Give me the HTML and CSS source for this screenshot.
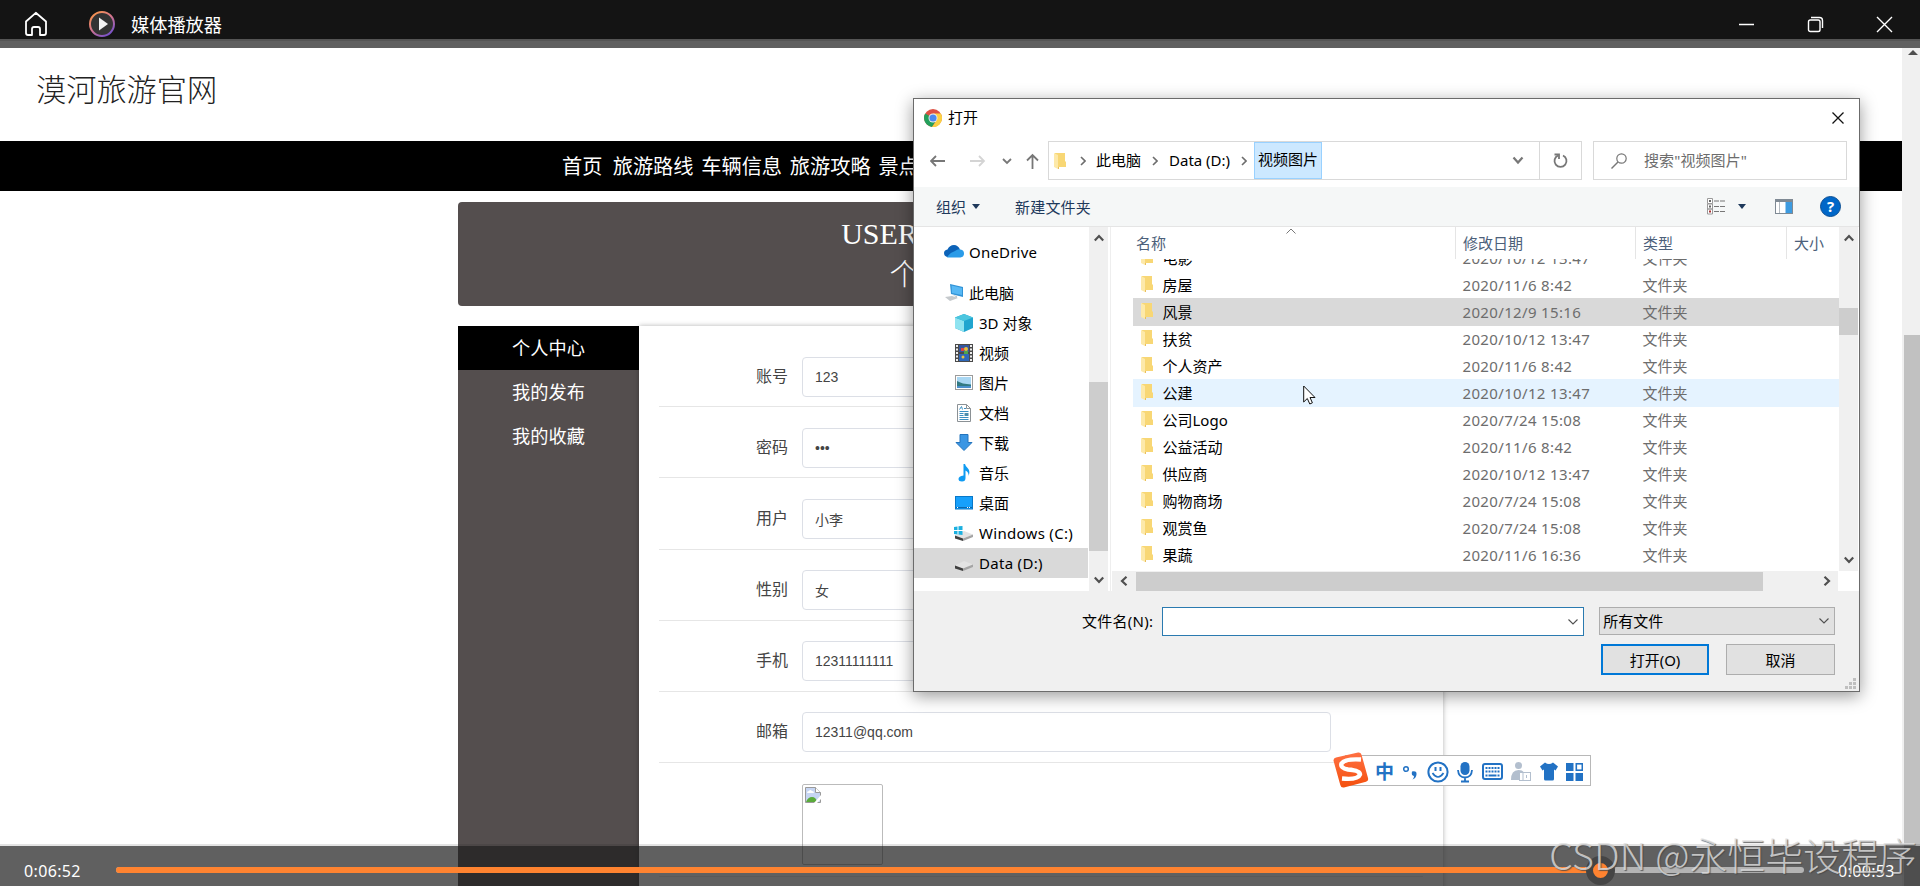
FILE: index.html
```html
<!DOCTYPE html>
<html lang="zh-CN">
  <head>
    <meta charset="UTF-8" />
    <meta name="viewport" content="width=device-width, initial-scale=1.0" />
    <title>媒体播放器</title>
    <link rel="stylesheet" href="styles.css">
  </head>
  <body>
    <!-- shared icons -->
    <svg class="sprite" width="0" height="0">
      <symbol id="folder" viewBox="0 0 12 18">
        <path d="M1 1h10v8l1 1v5H1z" fill="#f8d775" />
        <path d="M0 1l4 2v14l-4-2z" fill="#fde9a9" />
        <path d="M4 15h1v2H4z" fill="#e9bf5c" />
      </symbol>
      <symbol id="chev-right" viewBox="0 0 6 10">
        <path d="M1 1l4 4-4 4" fill="none" stroke="#6d6d6d" stroke-width="1.6" />
      </symbol>
      <symbol id="chev-up" viewBox="0 0 10 8">
        <path d="M.8 6.500L5 2l4.200 4.500" fill="none" stroke="#505050" stroke-width="2.200" />
      </symbol>
      <symbol id="chev-down" viewBox="0 0 10 8">
        <path d="M.8 1.500L5 6l4.200-4.500" fill="none" stroke="#505050" stroke-width="2.200" />
      </symbol>
      <symbol id="chev-thin" viewBox="0 0 10 6">
        <path d="M.5.5L5 5 9.500.5" fill="none" stroke="#505050" stroke-width="1.100" />
      </symbol>
      <symbol id="drive" viewBox="0 0 18 10">
        <path d="M0 4.500L9 0l9 3.500-10 4z" fill="#e3e3e3" />
        <path d="M0 4.500l8 3V10L0 7.500z" fill="#3f3f3f" />
        <path d="M8 7.500l10-4V6L8 10z" fill="#a5a5a5" />
      </symbol>
    </svg>

    <div class="player-bar">
      <svg class="home" width="24" height="26" viewBox="0 0 24 26">
        <path d="M2 10.500L11.800 1.800 22 10.500V22q0 2-2 2h-4v-6q0-2-2-2h-4q-2 0-2 2v6H4q-2 0-2-2z" fill="none" stroke="#fff" stroke-width="1.800" stroke-linejoin="round" />
      </svg>
      <svg class="play-logo" width="26" height="26" viewBox="0 0 26 26">
        <defs>
          <linearGradient id="ring" x1="0" y1="0" x2=".7" y2="1">
            <stop offset="0" stop-color="#ff9a3c" />
            <stop offset=".5" stop-color="#d9788a" />
            <stop offset="1" stop-color="#7a52c8" />
          </linearGradient>
        </defs>
        <circle cx="13" cy="13" r="12" fill="#333" stroke="url(#ring)" stroke-width="2" />
        <path d="M10 6.500l9 6.500-9 6.500z" fill="#f2f2f2" />
      </svg>
      <span class="player-title">媒体播放器</span>
      <div class="window-buttons">
        <svg width="17" height="17" viewBox="0 0 17 17"><path d="M1 8.500h15" stroke="#fff" stroke-width="1.500" /></svg>
        <svg width="17" height="17" viewBox="0 0 17 17">
          <rect x="1.500" y="4" width="11.500" height="11.500" rx="1.800" fill="none" stroke="#fff" stroke-width="1.400" />
          <path d="M4 1.500h8.500q3 0 3 3V12" fill="none" stroke="#fff" stroke-width="1.400" />
        </svg>
        <svg width="17" height="17" viewBox="0 0 17 17"><path d="M1 1l15 15M16 1L1 16" stroke="#fff" stroke-width="1.400" /></svg>
      </div>
    </div>
    <div class="bar-shade"></div>

    <div class="screen">
      <div class="site">
        <header class="site-header">漠河旅游官网</header>
        <nav class="site-nav">
          <a class="first">首页</a>
          <a>旅游路线</a>
          <a>车辆信息</a>
          <a>旅游攻略</a>
          <a>景点信息</a>
        </nav>
        <div class="banner">
          <p>USER / CENTER</p>
          <p>个人中心</p>
        </div>
        <div class="center">
          <ul class="side-menu">
            <li class="active">个人中心</li>
            <li>我的发布</li>
            <li>我的收藏</li>
          </ul>
          <form class="user-form">
            <div class="form-group">
              <label for="account">账号</label>
              <input type="text" id="account" value="123" />
            </div>
            <div class="form-group">
              <label for="password">密码</label>
              <input type="password" id="password" value="123" />
            </div>
            <div class="form-group">
              <label for="username">用户</label>
              <input type="text" id="username" value="小李" />
            </div>
            <div class="form-group">
              <label for="gender">性别</label>
              <input type="text" id="gender" value="女" />
            </div>
            <div class="form-group">
              <label for="phone">手机</label>
              <input type="text" id="phone" value="12311111111" />
            </div>
            <div class="form-group">
              <label for="email">邮箱</label>
              <input type="text" id="email" value="12311@qq.com" />
            </div>
            <div class="form-group photo-row">
              <div class="photo">
                <svg width="16" height="16" viewBox="0 0 16 16">
                  <path d="M.5.5h10l5 5v10H.5z" fill="#c6d5f3" stroke="#9a9a9a" />
                  <path d="M10.500.5v5h5" fill="#fff" stroke="#9a9a9a" />
                  <path d="M2 6q0-2 2-2 1-2 3 0 2 0 2 2z" fill="#fff" />
                  <path d="M1 15q2-5 6-5 4 0 5 5z" fill="#5aab3b" />
                  <path d="M16 8l-7 8h3l4-4z" fill="#fff" />
                </svg>
              </div>
            </div>
          </form>
        </div>
      </div>
      <div class="page-scroll">
        <div class="page-arrow"></div>
        <div class="page-thumb"></div>
      </div>
    </div>

    <!-- file dialog -->
    <div class="dialog">
      <div class="dialog-title">
        <svg width="18" height="18" viewBox="0 0 18 18">
          <circle cx="9" cy="9" r="9" fill="#dd5144" />
          <path d="M1.200 4.500A9 9 0 0 0 8 17.900L12.500 11 9 9z" fill="#23a05c" />
          <path d="M9 4.500h7.800A9 9 0 0 1 8 17.950L12.800 11z" fill="#fbd043" />
          <circle cx="9" cy="9" r="4.500" fill="#f3f0e8" />
          <circle cx="9" cy="9" r="3.600" fill="#4a8af0" />
        </svg>
        <span>打开</span>
        <svg class="dialog-close" width="12" height="12" viewBox="0 0 12 12"><path d="M.5.5l11 11M11.500.5l-11 11" stroke="#111" stroke-width="1.300" /></svg>
      </div>

      <div class="path-row">
        <svg class="arrows" width="110" height="16" viewBox="0 0 110 16">
          <path d="M15 8H1M6 3L1 8l5 5" fill="none" stroke="#777" stroke-width="1.800" />
          <path d="M40 8h14M49 3l5 5-5 5" fill="none" stroke="#d4d4d4" stroke-width="1.800" />
          <path d="M73 6l4 4 4-4" fill="none" stroke="#777" stroke-width="1.800" />
          <path d="M102.500 16V2M97 7.500l5.500-5.500 5.500 5.500" fill="none" stroke="#777" stroke-width="1.800" />
        </svg>
        <div class="path-box">
          <svg class="path-folder" width="12" height="18"><use href="#folder" /></svg>
          <svg class="sep" width="6" height="10"><use href="#chev-right" /></svg>
          <span class="crumb">此电脑</span>
          <svg class="sep" width="6" height="10"><use href="#chev-right" /></svg>
          <span class="crumb">Data (D:)</span>
          <svg class="sep" width="6" height="10"><use href="#chev-right" /></svg>
          <span class="crumb current">视频图片</span>
          <svg class="path-drop" width="12" height="9" viewBox="0 0 12 9"><path d="M1.500 1.500L6 6.500l4.500-5" fill="none" stroke="#777" stroke-width="2.200" /></svg>
          <div class="refresh">
            <svg width="15" height="16" viewBox="0 0 15 16"><path d="M5 2.500A6 6 0 1 0 10 2.500" fill="none" stroke="#777" stroke-width="1.800" /><path d="M1.500 1.500h4.500v4.500" fill="none" stroke="#777" stroke-width="1.800" /></svg>
          </div>
        </div>
        <div class="search-box">
          <svg width="16" height="16" viewBox="0 0 16 16"><circle cx="10.500" cy="5.500" r="4.700" fill="none" stroke="#777" stroke-width="1.200" /><path d="M7 9L.5 15.500" stroke="#777" stroke-width="1.400" /></svg>
          <span>搜索"视频图片"</span>
        </div>
      </div>

      <div class="toolbar">
        <span>组织</span>
        <i class="caret"></i>
        <span class="new-folder">新建文件夹</span>
        <svg class="view-icon" width="18" height="17" viewBox="0 0 18 17">
          <path d="M.5.5h5v5h-5zM.5 6h5v5h-5zM.5 11h5v5h-5z" fill="#fff" stroke="#9a9a9a" />
          <path d="M2 2h2v2H2zM2 7.500h2v2H2z" fill="#666" />
          <path d="M2 12.500h2v2H2z" fill="#a33" />
          <path d="M7 3h5M13 3h5M7 8.500h5M13 8.500h5M7 13.500h5M13 13.500h5" stroke="#777" stroke-width="1.200" />
        </svg>
        <i class="caret"></i>
        <svg class="preview-icon" width="18" height="15" viewBox="0 0 18 15">
          <rect x=".5" y=".5" width="17" height="14" fill="#fff" stroke="#7f8a94" />
          <path d="M0 0h18v3H0z" fill="#7f8a94" />
          <path d="M10.500 3H17v11h-6.500z" fill="#3d9be0" />
          <path d="M4.500 3v11" stroke="#b5bcc2" />
        </svg>
        <span class="help">?</span>
      </div>

      <div class="browser">
        <ul class="tree">
          <li class="top one-drive">
            <svg width="20" height="13" viewBox="0 0 20 13">
              <path d="M4 12q-4-.5-4-4 0-3 3.500-3.500Q5.500 0 10 0q4 0 6 4.500L10 9z" fill="#0c62b8" />
              <path d="M3 12.500Q5 8 11 6q3-2.500 5.500-1.500 3.500.5 3.500 4t-3.500 4z" fill="#2a9be8" />
            </svg>OneDrive
          </li>
          <li class="top">
            <svg width="20" height="17" viewBox="0 0 20 17">
              <path d="M6 0l13 3v10L7 10z" fill="#3293d6" />
              <path d="M7.500 1.500l10.500 2.500v7L8 9z" fill="#57b8f4" />
              <path d="M1 13l7-1 6 2-8 3zM9 11l4 1v2z" fill="#c5c9cc" />
            </svg>此电脑
          </li>
          <li>
            <svg width="18" height="18" viewBox="0 0 18 18">
              <path d="M9 0l9 3.500v10.500L9 18 0 14V3.500z" fill="#20a5cf" />
              <path d="M0 3.500L9 7v11l-9-4z" fill="#8fe3f0" />
              <path d="M0 3.500L9 0l9 3.500L9 7z" fill="#4cc6df" />
            </svg>3D 对象
          </li>
          <li>
            <svg width="18" height="18" viewBox="0 0 18 18">
              <path d="M0 0h18v18H0z" fill="#4a4a4a" />
              <path d="M4 1h10v7H4z" fill="#35569e" /><path d="M4 10h10v7H4z" fill="#2e67b7" />
              <path d="M6 4h3v3H6z" fill="#e0443c" /><circle cx="11" cy="5" r="2" fill="#e8c23e" />
              <path d="M9 7h4v3H9z" fill="#4fa54b" /><circle cx="8" cy="13" r="1.500" fill="#e8c23e" />
              <path d="M2 1v17M16 1v17" stroke="#eee" stroke-width="2" stroke-dasharray="2 1.500" />
            </svg>视频
          </li>
          <li>
            <svg width="18" height="15" viewBox="0 0 18 15">
              <rect x=".5" y=".5" width="17" height="14" fill="#fff" stroke="#9b9b9b" />
              <path d="M2 2h14v11H2z" fill="#a9d7f3" />
              <path d="M2 6q5 3 14 3.500V13H2z" fill="#327a83" /><path d="M2 11h14v2H2z" fill="#4b90cd" />
            </svg>图片
          </li>
          <li>
            <svg width="18" height="18" viewBox="0 0 18 18">
              <path d="M2.500.5h9l4 4v13h-13z" fill="#fff" stroke="#8b9195" /><path d="M11.500.5v4h4" fill="none" stroke="#8b9195" />
              <path d="M4.500 5.500l2-3 1 3M9 4.500h2M4.500 7.500h9M4.500 9.500h4M4.500 11.500h4M4.500 13.500h9M4.500 15.500h9" fill="none" stroke="#3b8fc2" /><path d="M9.500 9h4v3h-4z" fill="#4b8dac" />
            </svg>文档
          </li>
          <li>
            <svg width="18" height="17" viewBox="0 0 18 17"><path d="M5 .5h8v8h4L9 16.500 1 8.500h4z" fill="#3b96e3" stroke="#2474bd" /></svg>下载
          </li>
          <li>
            <svg width="18" height="18" viewBox="0 0 18 18"><path d="M8.500 0H10q.5 2.500 3 4.500 2.500 3 .5 7.500.5-4-3-5.500V14q0 3.500-3.500 3.500T3.500 15q0-3 5-3.500z" fill="#0f9bf2" /></svg>音乐
          </li>
          <li>
            <svg width="18" height="14" viewBox="0 0 18 14"><rect x=".5" y=".5" width="17" height="12.500" fill="#17a0fb" stroke="#0878c9" /><path d="M1 11.500h16" stroke="#0b67ad" /><path d="M2 11.500h1M12 11.500h1M14 11.500h1" stroke="#fff" /></svg>桌面
          </li>
          <li class="disk">
            <svg class="win-drive" width="19" height="15" viewBox="0 0 19 15">
              <use href="#drive" x="1" y="5" width="18" height="10" />
              <path d="M0 1l3.500-.5V4H0zM4.500.3L8.500 0v4h-4zM0 5h3.500v3.500L0 8zM4.500 5h4v4l-4-.4z" fill="#1bb0e0" />
            </svg>Windows (C:)
          </li>
          <li class="disk selected">
            <svg class="data-drive" width="18" height="10"><use href="#drive" /></svg>Data (D:)
          </li>
        </ul>
        <div class="vscroll tree-scroll">
          <svg width="10" height="8"><use href="#chev-up" /></svg>
          <div class="thumb"></div>
          <svg width="10" height="8"><use href="#chev-down" /></svg>
        </div>

        <div class="files">
          <div class="files-body">
            <div class="files-list">
              <div class="file-head">
                <svg class="sort-mark" width="10" height="6"><path d="M.5 5.500L5 1l4.500 4.500" fill="none" stroke="#777" /></svg>
                <span>名称</span><span>修改日期</span><span>类型</span><span>大小</span>
              </div>
              <div class="file-rows">
                <div class="file-row"><svg width="12" height="18"><use href="#folder" /></svg><b>电影</b><span class="date">2020/10/12 13:47</span><span>文件夹</span></div>
                <div class="file-row"><svg width="12" height="18"><use href="#folder" /></svg><b>房屋</b><span class="date">2020/11/6 8:42</span><span>文件夹</span></div>
                <div class="file-row selected"><svg width="12" height="18"><use href="#folder" /></svg><b>风景</b><span class="date">2020/12/9 15:16</span><span>文件夹</span></div>
                <div class="file-row"><svg width="12" height="18"><use href="#folder" /></svg><b>扶贫</b><span class="date">2020/10/12 13:47</span><span>文件夹</span></div>
                <div class="file-row"><svg width="12" height="18"><use href="#folder" /></svg><b>个人资产</b><span class="date">2020/11/6 8:42</span><span>文件夹</span></div>
                <div class="file-row hovered"><svg width="12" height="18"><use href="#folder" /></svg><b>公建</b><span class="date">2020/10/12 13:47</span><span>文件夹</span></div>
                <div class="file-row"><svg width="12" height="18"><use href="#folder" /></svg><b>公司Logo</b><span class="date">2020/7/24 15:08</span><span>文件夹</span></div>
                <div class="file-row"><svg width="12" height="18"><use href="#folder" /></svg><b>公益活动</b><span class="date">2020/11/6 8:42</span><span>文件夹</span></div>
                <div class="file-row"><svg width="12" height="18"><use href="#folder" /></svg><b>供应商</b><span class="date">2020/10/12 13:47</span><span>文件夹</span></div>
                <div class="file-row"><svg width="12" height="18"><use href="#folder" /></svg><b>购物商场</b><span class="date">2020/7/24 15:08</span><span>文件夹</span></div>
                <div class="file-row"><svg width="12" height="18"><use href="#folder" /></svg><b>观赏鱼</b><span class="date">2020/7/24 15:08</span><span>文件夹</span></div>
                <div class="file-row"><svg width="12" height="18"><use href="#folder" /></svg><b>果蔬</b><span class="date">2020/11/6 16:36</span><span>文件夹</span></div>
              </div>
            </div>
            <div class="vscroll list-scroll">
              <svg width="10" height="8"><use href="#chev-up" /></svg>
              <div class="thumb"></div>
              <svg width="10" height="8"><use href="#chev-down" /></svg>
            </div>
          </div>
          <div class="hscroll">
            <svg width="8" height="10" viewBox="0 0 8 10"><path d="M6.500.8L2 5l4.500 4.200" fill="none" stroke="#505050" stroke-width="2.200" /></svg>
            <div class="thumb"></div>
            <svg class="right" width="8" height="10" viewBox="0 0 8 10"><path d="M1.500.8L6 5 1.500 9.200" fill="none" stroke="#505050" stroke-width="2.200" /></svg>
          </div>
        </div>
      </div>

      <div class="dialog-footer">
        <div class="name-row">
          <label>文件名(N):</label>
          <div class="combo file-name"><svg width="10" height="6"><use href="#chev-thin" /></svg></div>
          <div class="combo file-type">所有文件<svg width="10" height="6"><use href="#chev-thin" /></svg></div>
        </div>
        <div class="button-row">
          <button class="btn-open">打开(O)</button>
          <button>取消</button>
        </div>
        <svg class="grip" width="12" height="12" viewBox="0 0 12 12"><path d="M8 0h3v3H8zM4 4h3v3H4zM8 4h3v3H8zM0 8h3v3H0zM4 8h3v3H4zM8 8h3v3H8z" fill="#bfbfbf" /></svg>
      </div>
    </div>

    <svg class="cursor" width="13" height="20" viewBox="0 0 13 20"><path d="M.7 1v16l3.600-3.500 2.500 5.500 2.600-1.200L7 12.500h5z" fill="#fff" stroke="#111" /></svg>

    <!-- input method toolbar -->
    <div class="ime">
      <svg class="ime-logo" width="36" height="36" viewBox="0 0 36 36">
        <defs>
          <linearGradient id="sogou" x1="0" y1="0" x2="0" y2="1">
            <stop offset="0" stop-color="#ff7043" />
            <stop offset="1" stop-color="#f4500d" />
          </linearGradient>
        </defs>
        <path d="M3 5.500L25 .6q3-.6 3.600 2.400L35 26q.8 3-2 3.800L11 35.500q-3 .6-3.700-2.400L.6 9Q0 6.200 3 5.500z" fill="url(#sogou)" />
        <path d="M28 7.500Q12 6.500 8.500 11.500 7 16 15 17.500q12 1 12 5Q25 28 9 26.500" fill="none" stroke="#fff" stroke-width="4.400" />
      </svg>
      <span class="ime-lang">中</span>
      <svg width="16" height="18" viewBox="0 0 16 18"><circle cx="4" cy="6" r="2.300" fill="none" stroke="#2272c4" stroke-width="1.500" /><path d="M10 8.500q5-1 4.500 3-.5 4-4 5 1.500-1.500 1.500-3.500-3-.5-2-4.500z" fill="#2272c4" /></svg>
      <svg width="22" height="22" viewBox="0 0 22 22"><circle cx="11" cy="11" r="9.600" fill="none" stroke="#2272c4" stroke-width="2" /><path d="M8.500 6v4M13.500 6v4" stroke="#2272c4" stroke-width="2" /><path d="M5.500 12q5.500 8 11 0" fill="none" stroke="#2272c4" stroke-width="1.700" /></svg>
      <svg width="16" height="22" viewBox="0 0 16 22"><rect x="3.500" y="1" width="9" height="13" rx="4.500" fill="#2272c4" /><path d="M1 9q.5 7.500 7 7.500T15 9M8 16v4M4 20.500h8" fill="none" stroke="#2272c4" stroke-width="1.800" /></svg>
      <svg width="21" height="17" viewBox="0 0 21 17"><rect x="1" y="1" width="19" height="15" rx="2" fill="none" stroke="#2272c4" stroke-width="2" /><path d="M3.500 5h14M3.500 8.500h14" stroke="#2272c4" stroke-width="2" stroke-dasharray="2 1" /><path d="M3.500 12.500h2M6.500 12.500h8M15.500 12.500h2" stroke="#2272c4" stroke-width="2" /></svg>
      <svg width="20" height="19" viewBox="0 0 20 19"><circle cx="7.500" cy="3.500" r="3.500" fill="#b3bfce" /><path d="M0 18q0-10 7.500-10 4 0 5 2H8v8z" fill="#b3bfce" /><rect x="8.500" y="10.500" width="11" height="8" fill="#fff" stroke="#b3bfce" /><path d="M12 10v9M15.500 13v3" stroke="#b3bfce" /></svg>
      <svg width="18" height="19" viewBox="0 0 18 19"><path d="M5 .5q4 3 8 0l5 4-2.500 4-1.500-1V17q0 1.500-1.500 1.500h-7Q4 18.500 4 17V7.500l-1.500 1L0 4.500z" fill="#2272c4" /></svg>
      <svg width="17" height="18" viewBox="0 0 17 18"><path d="M0 0h7.500v8H0zM0 10h7.500v8H0zM9.500 10H17v8H9.500z" fill="#2272c4" /><rect x="10.300" y=".8" width="6" height="6.400" fill="#fff" stroke="#2272c4" stroke-width="1.600" /></svg>
    </div>

    <div class="controls">
      <span>0:06:52</span>
      <div class="track">
        <div class="played" style="width: 88%"></div>
        <div class="knob" style="left: 88%"></div>
      </div>
      <span>0:00:53</span>
    </div>
    <div class="watermark">CSDN @永恒毕设程序</div>
  </body>
</html>
```

FILE: styles.css
```css
* {
  box-sizing: border-box;
}

body {
  margin: 0;
  height: 886px;
  overflow: hidden;
  position: relative;
  background: #fff;
  font-family: "Noto Sans", "Noto Sans CJK SC", sans-serif;
}

svg {
  display: block;
  flex-shrink: 0;
}

.sprite {
  position: absolute;
}

/* Player title bar */
.player-bar {
  height: 39px;
  background: #141414;
  color: #fff;
  display: flex;
  align-items: center;
  padding: 9px 27px 0 24px;
}

.play-logo {
  margin-left: 41px;
}

.player-title {
  margin-left: 16px;
  padding-top: 1px;
  font-size: 18.2px;
  line-height: 28px;
}

.window-buttons {
  display: flex;
  gap: 52px;
  margin-left: auto;
}

.bar-shade {
  height: 9px;
  background: #606060;
  border-top: 2px solid #555;
}

.screen {
  height: 838px;
  display: flex;
  overflow: hidden;
}

/* Travel site */
.site {
  flex: 1;
}

.site-header {
  height: 93px;
  padding-left: 36px;
  font-size: 30.2px;
  font-weight: 300;
  line-height: 84px;
  color: #222;
}

.site-nav {
  height: 50px;
  background: #000;
  color: #fff;
  display: flex;
  gap: 7.8px;
  padding-left: 562px;
  font-size: 20.2px;
  line-height: 51px;
}

.site-nav .first {
  margin-right: 2.500px;
}

.banner {
  width: 985px;
  height: 104px;
  margin: 11px 0 20px 458px;
  padding-top: 11px;
  padding-right: 2px;
  border-radius: 4px;
  background: #544e4e;
  color: #fff;
  text-align: center;
  font-family: "Liberation Serif", "Noto Sans CJK SC", serif;
  font-size: 30px;
  font-weight: 300;
  line-height: 41px;
}

.banner p {
  margin: 0;
}

.center {
  width: 985px;
  height: 700px;
  margin-left: 458px;
  display: flex;
}

.side-menu {
  width: 181px;
  margin: 0;
  padding: 0;
  list-style: none;
  background: #544e4e;
  color: #fff;
  text-align: center;
  font-size: 18.2px;
  line-height: 44px;
}

.side-menu li {
  height: 44px;
}

.side-menu .active {
  background: #000;
}

.user-form {
  flex: 1;
  padding: 10px 20px;
  box-shadow: 0 0 5px rgba(0, 0, 0, 0.3);
}

.form-group {
  height: 71.2px;
  padding-top: 20.5px;
  display: flex;
  border-bottom: 1px solid #e6e6e6;
}

.form-group label {
  width: 129px;
  margin-right: 14px;
  text-align: right;
  font-size: 16px;
  line-height: 39px;
  color: #444;
}

.form-group input {
  width: 529px;
  height: 40px;
  padding: 0 12px;
  border: 1px solid #dcdfe6;
  border-radius: 4px;
  background: #fff;
  color: #444;
  font-family: "Liberation Sans", "Noto Sans CJK SC", sans-serif;
  font-size: 14px;
}

.photo-row {
  height: 114px;
  padding-top: 21px;
  padding-left: 143px;
}

.photo {
  width: 81px;
  height: 81px;
  padding: 2px;
  border: 1px solid #bbb;
  border-radius: 2px;
}

.page-scroll {
  width: 18px;
  background: #f0f0f0;
}

.page-arrow {
  width: 0;
  margin: 2px 0 280px 6px;
  border: 5px solid transparent;
  border-top: 0;
  border-bottom: 5px solid #505050;
}

.page-thumb {
  height: 600px;
  margin-left: 2px;
  background: #c1c1c1;
}

/* Open file dialog */
.dialog {
  position: absolute;
  left: 913px;
  top: 98px;
  width: 947px;
  height: 594px;
  display: flex;
  flex-direction: column;
  border: 1px solid #6b6b6b;
  background: #fff;
  box-shadow: 0 4px 16px rgba(0, 0, 0, 0.4);
  color: #000;
  font-size: 15px;
  line-height: 20px;
}

.dialog-title {
  height: 42px;
  display: flex;
  align-items: center;
  padding: 0 15px 5px 10px;
  gap: 6px;
}

.dialog-title span {
  padding-bottom: 2px;
}

.dialog-close {
  margin-left: auto;
}

.path-row {
  height: 39px;
  display: flex;
  align-items: center;
  padding-left: 16px;
}

.path-box {
  width: 534px;
  height: 39px;
  margin-left: 8px;
  padding-left: 5px;
  display: flex;
  align-items: center;
  border: 1px solid #d9d9d9;
}

.sep {
  margin: 0 9px 0 10px;
}

.path-folder + .sep {
  margin: 0 8px 0 14px;
}

.crumb {
  padding: 0 1px 2px 2px;
}

.current {
  height: 37px;
  margin-left: -2px;
  padding: 0 3px;
  border: 1px solid #99d1ff;
  background: #cce8ff;
  line-height: 33px;
}

.path-drop {
  margin-left: auto;
  margin-right: 15px;
}

.refresh {
  width: 42px;
  height: 37px;
  display: flex;
  align-items: center;
  justify-content: center;
  border-left: 1px solid #d9d9d9;
}

.search-box {
  width: 254px;
  height: 39px;
  margin-left: 11px;
  padding-left: 17px;
  display: flex;
  align-items: center;
  gap: 17px;
  border: 1px solid #d9d9d9;
  color: #6d6d6d;
}

.search-box span {
  padding-bottom: 2px;
  letter-spacing: 0.1px;
}

.toolbar {
  height: 40px;
  margin-top: 7px;
  padding: 0 18px 0 22px;
  display: flex;
  align-items: center;
  background: #f5f7f7;
  border-bottom: 1px solid #e5e5e5;
  color: #1e395b;
}

.caret {
  margin-left: 6px;
  border: 4px solid transparent;
  border-top: 5px solid #1e395b;
  border-bottom: 0;
}

.new-folder {
  margin-left: 35px;
  letter-spacing: 0.2px;
}

.view-icon {
  margin-left: auto;
  margin-right: 7px;
}

.preview-icon {
  margin-left: 29px;
}

.help {
  width: 21px;
  height: 21px;
  margin-left: 27px;
  border: 1px solid #0b4f94;
  border-radius: 50%;
  background: #0067c8;
  color: #fff;
  text-align: center;
  font-weight: bold;
  line-height: 19px;
}

.browser {
  height: 364px;
  display: flex;
}

.tree {
  width: 175px;
  margin: 0;
  padding: 10px 1px 0 0;
  list-style: none;
}

.tree li {
  height: 30px;
  padding-left: 41px;
  padding-bottom: 1px;
  display: flex;
  align-items: center;
  gap: 6px;
}

.tree .top {
  padding-left: 30px;
  gap: 5px;
}

.tree .one-drive {
  margin-bottom: 11px;
  letter-spacing: 0.2px;
}

.tree .disk {
  padding-bottom: 0;
  letter-spacing: 0.3px;
}

.tree .selected {
  background: #d9d9d9;
}

.win-drive {
  margin-left: -1px;
}

.data-drive {
  margin-top: 6px;
}

.vscroll {
  width: 19px;
  display: flex;
  flex-direction: column;
  align-items: center;
  background: #f0f0f0;
}

.vscroll svg:first-child {
  margin-top: 7px;
}

.vscroll svg:last-child {
  margin-top: auto;
  margin-bottom: 7px;
}

.vscroll .thumb {
  width: 19px;
  background: #cdcdcd;
}

.tree-scroll .thumb {
  height: 169px;
  margin-top: 140px;
}

.list-scroll .thumb {
  height: 27px;
  margin-top: 66px;
}

.files {
  width: 748px;
  margin-left: 2px;
  border-left: 1px solid #eee;
}

.files-body {
  height: 344px;
  display: flex;
}

.files-list {
  width: 728px;
}

.file-head {
  position: relative;
  height: 32px;
  padding-left: 25px;
  display: grid;
  grid-template-columns: 319px 180px 151px 1fr;
  color: #4c607a;
  line-height: 32px;
}

.sort-mark {
  position: absolute;
  left: 175px;
  top: 1px;
}

.file-head span + span {
  padding-left: 7px;
  border-left: 1px solid #e5e5e5;
}

.file-rows {
  height: 312px;
  margin-left: 22px;
  overflow: hidden;
}

.file-row {
  height: 27.08px;
  padding-left: 8px;
  padding-bottom: 1px;
  display: grid;
  grid-template-columns: 21.500px 300px 180px 1fr;
  align-items: center;
  color: #6d6d6d;
  line-height: 25px;
}

.file-row:first-child {
  margin-top: -14px;
}

.file-row b {
  color: #000;
  font-weight: normal;
}

.file-row .date {
  letter-spacing: 0.35px;
}

.file-row svg {
  margin-top: -3px;
}

.file-row.selected {
  background: #d9d9d9;
  box-shadow: 0 -1px #d9d9d9;
}

.file-row.hovered {
  background: #e5f3ff;
  box-shadow: 0 -1px #e5f3ff;
}

.hscroll {
  width: 726px;
  height: 20px;
  margin-left: 1px;
  padding-left: 8px;
  display: flex;
  align-items: center;
  background: #f0f0f0;
}

.hscroll .thumb {
  width: 627px;
  height: 19px;
  margin-left: 8px;
  background: #cdcdcd;
}

.hscroll .right {
  margin-left: auto;
  margin-right: 7px;
}

.dialog-footer {
  position: relative;
  flex: 1;
  padding: 16px 24px 0 168px;
  background: #f0f0f0;
}

.name-row {
  display: flex;
  line-height: 29px;
}

.name-row label {
  width: 72px;
  margin-right: 8px;
  white-space: nowrap;
  letter-spacing: 0.25px;
}

.combo {
  height: 28px;
  padding: 0 5px 0 3px;
  display: flex;
  align-items: center;
  justify-content: space-between;
  border: 1px solid #adadad;
  background: #e1e1e1;
}

.file-name {
  width: 423px;
  height: 29px;
  margin-right: 15px;
  justify-content: flex-end;
  border-color: #2a7ab0;
  background: #fff;
}

.file-type {
  width: 236px;
}

.button-row {
  display: flex;
  justify-content: flex-end;
  gap: 17px;
  margin-top: 8px;
}

.button-row button {
  width: 109px;
  height: 31px;
  padding: 0 0 1px;
  border: 1px solid #adadad;
  background: #e1e1e1;
  font-family: inherit;
  font-size: 15px;
}

.button-row .btn-open {
  width: 108px;
  border: 2px solid #0078d7;
}

.grip {
  position: absolute;
  right: 2px;
  bottom: 1px;
}

.cursor {
  position: absolute;
  left: 1303px;
  top: 385px;
}

/* Input method toolbar */
.ime {
  position: absolute;
  left: 1345px;
  top: 755px;
  width: 246px;
  height: 31px;
  padding: 2px 7px 0 29px;
  display: flex;
  align-items: center;
  justify-content: space-between;
  border: 1px solid #b8b8b8;
  background: #fff;
}

.ime-logo {
  position: absolute;
  left: -13px;
  top: -4px;
}

.ime-lang {
  color: #2272c4;
  font-size: 19px;
  font-weight: bold;
  line-height: 26px;
}

/* Playback controls */
.controls {
  position: absolute;
  left: 0;
  bottom: 0;
  width: 1920px;
  height: 42px;
  padding: 8px 24px 0;
  display: flex;
  align-items: center;
  justify-content: space-between;
  border-top: 2px solid rgba(28, 28, 28, 0.12);
  background: rgba(28, 28, 28, 0.7);
  background-clip: padding-box;
  color: #fff;
  font-size: 16px;
}

.controls span {
  width: 58px;
  padding-top: 1px;
  letter-spacing: 0.35px;
}

.track {
  position: relative;
  width: 1688px;
  height: 6px;
  border-radius: 3px;
  background: #b4b4b4;
}

.played {
  height: 6px;
  border-radius: 3px;
  background: #ff8330;
}

.knob {
  position: absolute;
  top: -11px;
  width: 29px;
  height: 29px;
  margin-left: -15px;
  border: 7px solid #454545;
  border-radius: 50%;
  background: #ff8330;
}

.watermark {
  position: absolute;
  right: 3px;
  bottom: 5px;
  color: rgba(225, 225, 225, 0.8);
  font-family: "Noto Sans CJK SC", sans-serif;
  font-size: 37.6px;
  font-weight: 300;
  line-height: 54px;
  letter-spacing: 0.3px;
  text-shadow: 1px 1px 1px rgba(70, 70, 70, 0.8);
}
```
